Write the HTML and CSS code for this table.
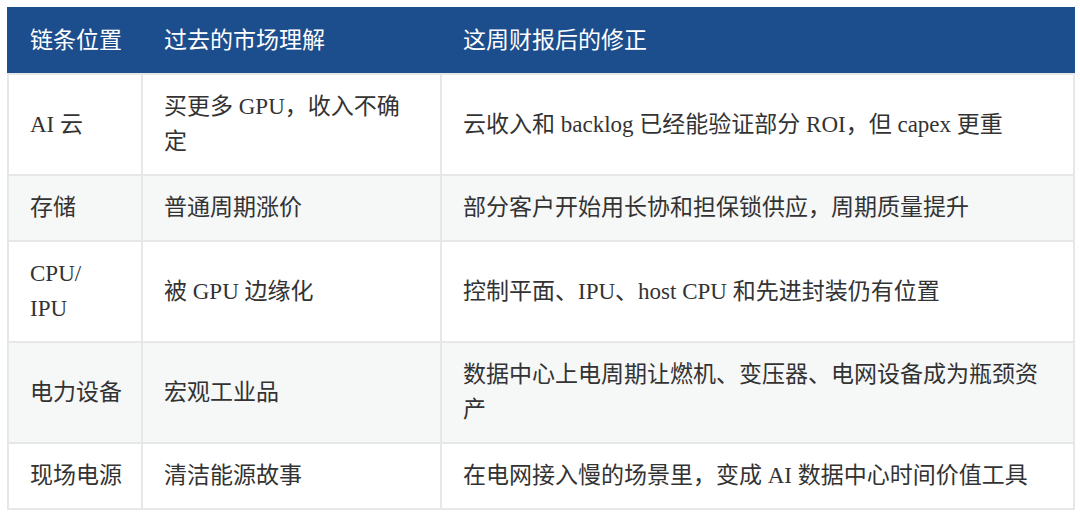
FILE: index.html
```html
<!DOCTYPE html>
<html lang="zh-CN">
<head>
<meta charset="utf-8">
<link rel="stylesheet" href="styles.css">
</head>
<body>
<table class="chain">
  <colgroup>
    <col class="c1">
    <col class="c2">
    <col class="c3">
  </colgroup>
  <thead>
    <tr>
      <th>链条位置</th>
      <th>过去的市场理解</th>
      <th>这周财报后的修正</th>
    </tr>
  </thead>
  <tbody>
    <tr>
      <td>AI 云</td>
      <td>买更多 GPU，收入不确定</td>
      <td>云收入和 backlog 已经能验证部分 ROI，但 capex 更重</td>
    </tr>
    <tr class="alt">
      <td>存储</td>
      <td>普通周期涨价</td>
      <td>部分客户开始用长协和担保锁供应，周期质量提升</td>
    </tr>
    <tr>
      <td>CPU/<br>IPU</td>
      <td>被 GPU 边缘化</td>
      <td>控制平面、IPU、host CPU 和先进封装仍有位置</td>
    </tr>
    <tr class="alt">
      <td>电力设备</td>
      <td>宏观工业品</td>
      <td>数据中心上电周期让燃机、变压器、电网设备成为瓶颈资产</td>
    </tr>
    <tr>
      <td>现场电源</td>
      <td>清洁能源故事</td>
      <td>在电网接入慢的场景里，变成 AI 数据中心时间价值工具</td>
    </tr>
  </tbody>
</table>
</body>
</html>
```

FILE: styles.css
```css
html, body {
  margin: 0;
  padding: 0;
  background: #ffffff;
}

body {
  padding: 7px 7px 0 7px;
  font-family: "Liberation Serif", "Noto Sans CJK SC", serif;
  color: #333333;
}

.chain {
  width: 1066px;
  table-layout: fixed;
  border-collapse: collapse;
  font-size: 23px;
  line-height: 35px;
}

.chain .c1 { width: 134px; }
.chain .c2 { width: 299px; }
.chain .c3 { width: 633px; }

.chain th,
.chain td {
  text-align: left;
  vertical-align: middle;
  padding: 14px 17px 15px 21px;
  border: 2px solid #e6e7e8;
}

.chain td:nth-child(2) {
  padding-right: 30px;
}

.chain th {
  background: #1c4d8c;
  color: #ffffff;
  font-weight: 400;
  border-color: #1c4d8c;
  border-bottom-color: #e6e7e8;
  padding-top: 14px;
  padding-bottom: 15px;
}

.chain .alt td {
  background: #f6f7f7;
}
```
